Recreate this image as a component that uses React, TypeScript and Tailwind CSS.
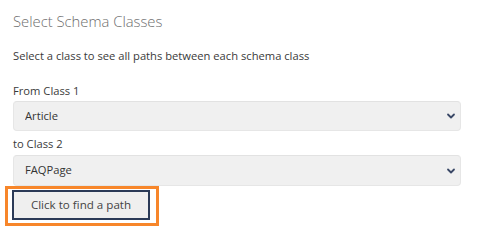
import React from "react";

function Chevron() {
  return (
    <svg
      className="pointer-events-none absolute right-[5px] top-1/2 -translate-y-1/2"
      width="10"
      height="8"
      viewBox="0 0 10 8"
      fill="none"
    >
      <path d="M2 2.5 L5 5.5 L8 2.5" stroke="#3a4866" strokeWidth="1.8" strokeLinecap="round" strokeLinejoin="round" />
    </svg>
  );
}

function SelectBox({ value, h }: { value: string; h: string }) {
  return (
    <div className={`relative w-[448px] ${h}`}>
      <select
        defaultValue={value}
        className="h-full w-full appearance-none rounded-[4px] border border-[#e6e6e6] border-t-[#e2e2e2] bg-[#f0f0f0] pl-[11px] text-[11.2px] text-[#333] outline-none"
      >
        <option>{value}</option>
      </select>
      <Chevron />
    </div>
  );
}

export default function App() {
  return (
    <div
      className="w-[481px] h-[232px] bg-white pl-[13px] pt-[9px]"
      style={{ fontFamily: '"Open Sans", "Noto Sans", sans-serif' }}
    >
      <h1 className="text-[14.8px] leading-[24px] font-light text-[#6d6d6d]">Select Schema Classes</h1>
      <p className="mt-[14px] text-[11.2px] leading-[18px] text-[#3a3a3a]">
        Select a class to see all paths between each schema class
      </p>
      <div className="mt-[17px] text-[11.2px] leading-[18px] text-[#3a3a3a]">From Class 1</div>
      <div className="mt-[1px]">
        <SelectBox value="Article" h="h-[30px]" />
      </div>
      <div className="mt-[4px] text-[11.2px] leading-[18px] text-[#3a3a3a]">to Class 2</div>
      <div className="mt-[2px]">
        <SelectBox value="FAQPage" h="h-[31px]" />
      </div>
      <div className="-ml-[8px] w-[154px] border-[3px] border-[#f7862a] pl-[4px] pt-[1px] pb-[3px]">
        <button className="h-[30px] w-[138px] border-2 border-[#2b3a57] bg-[#efefef] text-[11.6px] text-[#444]">
          Click to find a path
        </button>
      </div>
    </div>
  );
}
